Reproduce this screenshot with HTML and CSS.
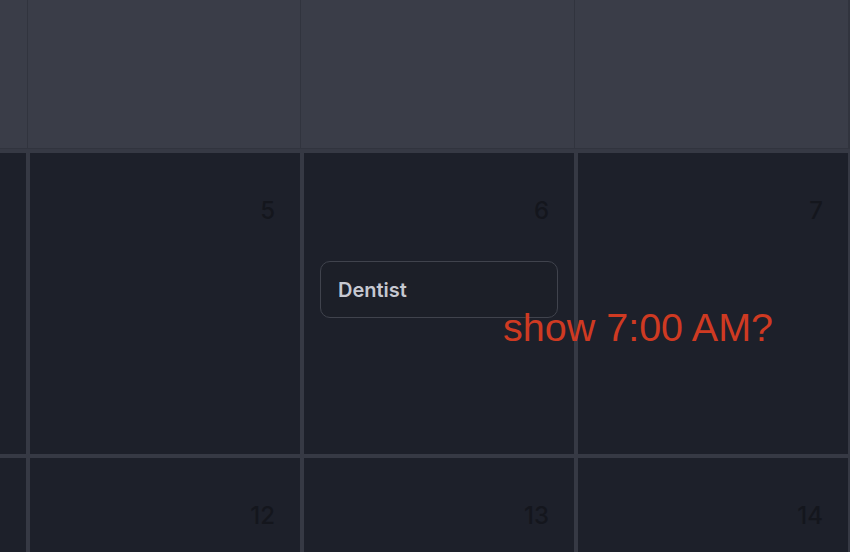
FILE: index.html
```html
<!DOCTYPE html>
<html lang="en">
<head>
<meta charset="utf-8">
<title>Calendar</title>
<link rel="stylesheet" href="styles.css">
</head>
<body>
<div class="calendar">
  <div class="header">
    <div class="hcell"></div>
    <div class="hcell"></div>
    <div class="hcell"></div>
    <div class="hcell"></div>
    <div class="hcell"></div>
  </div>
  <div class="body">
    <div class="day"></div>
    <div class="day"><span class="num">5</span></div>
    <div class="day"><span class="num">6</span>
      <div class="event"><span class="event-title">Dentist</span></div>
    </div>
    <div class="day"><span class="num">7</span></div>
    <div class="day"></div>
    <div class="day"></div>
    <div class="day"><span class="num">12</span></div>
    <div class="day"><span class="num">13</span></div>
    <div class="day"><span class="num">14</span></div>
    <div class="day"></div>
  </div>
  <div class="question">show 7:00 AM?</div>
</div>
</body>
</html>
```

FILE: styles.css
```css
html, body {
  margin: 0;
  padding: 0;
  background: #1d202a;
}

.calendar {
  position: relative;
  width: 850px;
  height: 552px;
  overflow: hidden;
  background: #363944;
  font-family: Inter, "Noto Sans", sans-serif;
}

.header {
  display: grid;
  grid-template-columns: 28px 273px 274px 274px 1fr;
  height: 148px;
  background: #3a3d48;
  border-bottom: 1px solid #31343e;
}

.hcell {
  border-right: 1px solid #31343e;
}

.body {
  display: grid;
  grid-template-columns: 26px 270px 270px 270px 1fr;
  grid-template-rows: 301px 301px;
  column-gap: 4px;
  row-gap: 4px;
  margin-top: 4px;
}

.day {
  background: #1d202a;
  display: flex;
  flex-direction: column;
  align-items: stretch;
  padding: 46px 0 0 0;
  box-sizing: border-box;
}

.num {
  align-self: flex-end;
  padding-right: 25px;
  font-size: 24px;
  line-height: 24px;
  font-weight: 500;
  color: #14161d;
  white-space: nowrap;
}

.event {
  margin: 38px 16px 0 16px;
  height: 57px;
  box-sizing: border-box;
  border: 1px solid #40434d;
  border-radius: 10px;
  background: #1c1f28;
  display: flex;
  align-items: center;
  padding-left: 17px;
}

.event-title {
  font-size: 20px;
  font-weight: 600;
  color: #c6c8d1;
}

.question {
  position: absolute;
  left: 503px;
  top: 305px;
  font-family: "Liberation Sans", Arial, sans-serif;
  font-size: 39.5px;
  line-height: 44px;
  color: #cf3a22;
  white-space: nowrap;
}
```
